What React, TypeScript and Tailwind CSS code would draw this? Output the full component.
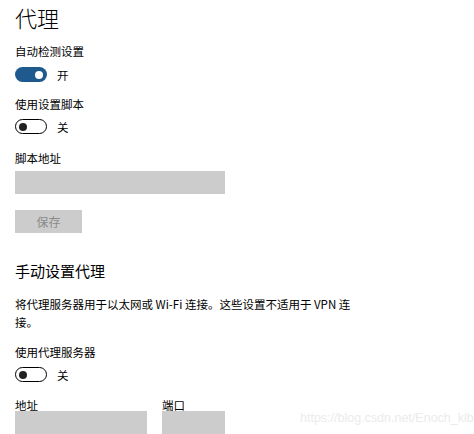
const font = { fontFamily: '"Noto Sans CJK SC", "Noto Sans", sans-serif' }

function Toggle({ on, label }: { on: boolean; label: string }) {
  return (
    <div className="flex items-center gap-[10px] h-[15px]">
      {on ? (
        <div className="w-[32px] h-[15px] rounded-full bg-[#1e5a8e] flex items-center justify-end pr-[4px]">
          <div className="w-[8px] h-[8px] rounded-full bg-white" />
        </div>
      ) : (
        <div className="w-[32px] h-[15px] rounded-full border-[1.5px] border-black flex items-center pl-[3px]">
          <div className="w-[8px] h-[8px] rounded-full bg-[#222]" />
        </div>
      )}
      <span className="text-[11.5px] leading-[12px] text-black">{label}</span>
    </div>
  )
}

export default function App() {
  return (
    <div className="relative w-[474px] h-[434px] bg-white overflow-hidden text-black" style={font}>
      <div className="flex flex-col pl-[15px] pt-[6px]">
        <div className="text-[22px] leading-[22px] font-light">代理</div>

        <div className="mt-[17px] text-[11.5px] leading-[12px]">自动检测设置</div>
        <div className="mt-[10px]">
          <Toggle on label="开" />
        </div>

        <div className="mt-[16px] text-[11.5px] leading-[12px]">使用设置脚本</div>
        <div className="mt-[9px]">
          <Toggle on={false} label="关" />
        </div>

        <div className="mt-[18px] text-[11.5px] leading-[12px]">脚本地址</div>
        <div className="mt-[7px] w-[210px] h-[23px] bg-[#cccccc]" />
        <div className="mt-[16px] w-[67px] h-[23px] bg-[#cccccc] flex items-center justify-center text-[12px] text-[#8a8a8a]">
          保存
        </div>

        <div className="mt-[30px] text-[15px] leading-[15px]">手动设置代理</div>
        <div className="mt-[17px] w-[338px] text-[11.5px] leading-[18px]">
          将代理服务器用于以太网或 Wi-Fi 连接。这些设置不适用于 VPN 连接。
        </div>

        <div className="mt-[15px] text-[11.5px] leading-[12px]">使用代理服务器</div>
        <div className="mt-[9px]">
          <Toggle on={false} label="关" />
        </div>

        <div className="mt-[17px] flex gap-[15px]">
          <div className="flex flex-col">
            <div className="text-[11.5px] leading-[12px]">地址</div>
            <div className="w-[132px] h-[23px] bg-[#cccccc]" />
          </div>
          <div className="flex flex-col">
            <div className="text-[11.5px] leading-[12px]">端口</div>
            <div className="w-[63px] h-[23px] bg-[#cccccc]" />
          </div>
        </div>
      </div>

      <div
        className="absolute left-[300px] top-[411px] text-[12.5px] leading-[14px] text-[#ebebeb]"
        style={{ fontFamily: '"Liberation Sans", Arial, sans-serif' }}
      >
        https://blog.csdn.net/Enoch_klb
      </div>
    </div>
  )
}
